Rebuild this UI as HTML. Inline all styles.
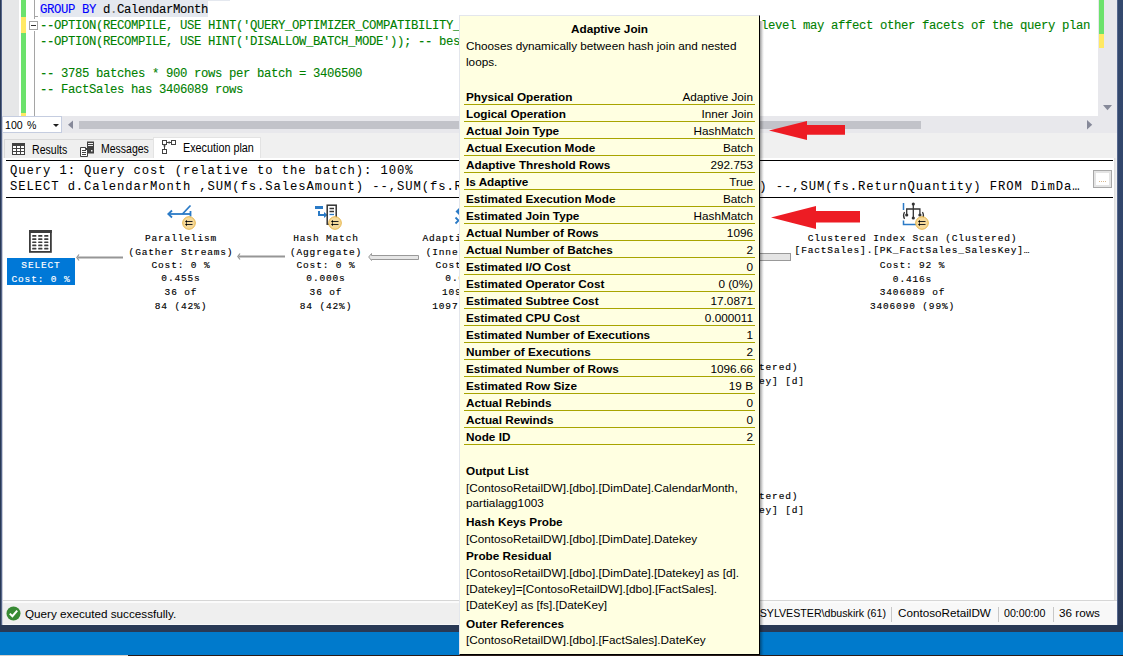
<!DOCTYPE html>
<html><head><meta charset="utf-8"><style>
*{margin:0;padding:0;box-sizing:border-box}
html,body{width:1123px;height:656px;overflow:hidden;background:#293955;position:relative;font-family:"Liberation Sans",sans-serif}
.a{position:absolute}
.m{font-family:"Liberation Mono",monospace;white-space:pre}
.s{font-family:"Liberation Sans",sans-serif;white-space:pre}
.cm{color:#008000}.kw{color:#0000ff}.op{color:#808080}
</style></head><body>
<div class="a" style="left:2px;top:0;width:1115px;height:116px;background:#fff"></div>
<div class="a" style="left:2px;top:0;width:17px;height:116px;background:#e6e7e8"></div>
<div class="a" style="left:21px;top:0;width:5px;height:17px;background:#6ce26c"></div>
<div class="a" style="left:21px;top:17px;width:5px;height:16px;background:#ffe963"></div>
<div class="a" style="left:21px;top:33px;width:5px;height:80px;background:#6ce26c"></div>
<div class="a" style="left:21px;top:113px;width:5px;height:3px;background:#ffe963"></div>
<div class="a" style="left:34px;top:0;width:1px;height:19px;background:#a5a5a5"></div>
<div class="a" style="left:35px;top:16px;width:3px;height:1px;background:#a5a5a5"></div>
<div class="a" style="left:29px;top:21px;width:9px;height:9px;border:1px solid #a5a5a5;background:#fff"></div>
<div class="a" style="left:31px;top:25px;width:5px;height:1px;background:#333"></div>
<div class="a" style="left:34px;top:31px;width:1px;height:85px;background:#a5a5a5"></div>
<div class="a" style="left:40px;top:0;width:190px;height:1px;background:#e4e8ef"></div>
<div class="a" style="left:40px;top:0;width:168px;height:17px;background:#e4e8ef"></div>
<div class="a m" style="left:40px;top:1.72px;font-size:12.3px;line-height:16px;letter-spacing:-0.38px;-webkit-text-stroke:0.1px currentColor"><span class="kw">GROUP BY</span> d<span class="op">.</span>CalendarMonth</div>
<div class="a m" style="left:40px;top:17.72px;font-size:12.3px;line-height:16px;letter-spacing:-0.38px;-webkit-text-stroke:0.1px currentColor"><span class="cm">--OPTION(RECOMPILE, USE HINT(&#x27;QUERY_OPTIMIZER_COMPATIBILITY_                                           level may affect other facets of the query plan</span></div>
<div class="a m" style="left:40px;top:33.72px;font-size:12.3px;line-height:16px;letter-spacing:-0.38px;-webkit-text-stroke:0.1px currentColor"><span class="cm">--OPTION(RECOMPILE, USE HINT(&#x27;DISALLOW_BATCH_MODE&#x27;)); -- best</span></div>
<div class="a m" style="left:40px;top:65.72px;font-size:12.3px;line-height:16px;letter-spacing:-0.38px;-webkit-text-stroke:0.1px currentColor"><span class="cm">-- 3785 batches * 900 rows per batch = 3406500</span></div>
<div class="a m" style="left:40px;top:81.72px;font-size:12.3px;line-height:16px;letter-spacing:-0.38px;-webkit-text-stroke:0.1px currentColor"><span class="cm">-- FactSales has 3406089 rows</span></div>
<div class="a" style="left:1098px;top:0;width:19px;height:116px;background:#e8e8ec"></div>
<div class="a" style="left:1099px;top:0;width:5px;height:34px;background:#6ce26c"></div>
<div class="a" style="left:1099px;top:34px;width:5px;height:14px;background:#ffe963"></div>
<svg class="a" style="left:1103px;top:105px" width="10" height="6"><path d="M0 0H9L4.5 5.2Z" fill="#868999"/></svg>
<div class="a" style="left:2px;top:116px;width:1115px;height:17px;background:#e8e8ec"></div>
<div class="a" style="left:2px;top:116px;width:60px;height:17px;background:#fff;border:1px solid #c5cde0"></div>
<div class="a s" style="left:5px;top:117.02px;font-size:11.5px;line-height:16px;color:#000;transform:scaleX(0.92);transform-origin:0 0;word-spacing:1.5px">100 %</div>
<svg class="a" style="left:53px;top:124px" width="6" height="4"><path d="M0 0H6L3 3Z" fill="#1e1e1e"/></svg>
<svg class="a" style="left:68px;top:120px" width="6" height="10"><path d="M5 0.5V9L0 4.75Z" fill="#868999"/></svg>
<div class="a" style="left:79px;top:121px;width:842px;height:8px;background:#c2c3c9"></div>
<svg class="a" style="left:1087px;top:120px" width="6" height="10"><path d="M0 0V9.5L5.2 4.75Z" fill="#868999"/></svg>
<div class="a" style="left:2px;top:133px;width:1115px;height:25px;background:#f0f0f0"></div>
<div class="a" style="left:4px;top:139px;width:69px;height:20px;background:#efefef;border:1px solid #d9d9d9;border-bottom:none"></div>
<div class="a" style="left:72px;top:139px;width:82px;height:20px;background:#efefef;border:1px solid #d9d9d9;border-bottom:none;border-left:none"></div>
<div class="a" style="left:153px;top:137px;width:108px;height:22px;background:#fff;border:1px solid #e3e3e3;border-bottom:none"></div>
<svg class="a" style="left:12px;top:143px" width="14" height="13"><rect x="0" y="0" width="13" height="12" fill="#424242"/><rect x="1" y="3" width="3" height="2" fill="#fff"/><rect x="5" y="3" width="3" height="2" fill="#fff"/><rect x="9" y="3" width="3" height="2" fill="#fff"/><rect x="1" y="6" width="3" height="2" fill="#fff"/><rect x="5" y="6" width="3" height="2" fill="#fff"/><rect x="9" y="6" width="3" height="2" fill="#fff"/><rect x="1" y="9" width="3" height="2" fill="#fff"/><rect x="5" y="9" width="3" height="2" fill="#fff"/><rect x="9" y="9" width="3" height="2" fill="#fff"/></svg>
<div class="a s" style="left:32px;top:141.84px;font-size:12px;line-height:16px;color:#000;transform:scaleX(0.88);transform-origin:0 0">Results</div>
<svg class="a" style="left:79px;top:141px" width="16" height="16"><path d="M1.5 6.5H6.5L8.5 8.5V15.5H1.5Z" fill="#fff" stroke="#424242" stroke-width="1"/><path d="M3 9.5H7M3 11.5H7M3 13.5H7" stroke="#424242" stroke-width="1"/><rect x="8" y="0.5" width="7" height="12" fill="#424242"/><rect x="9" y="2" width="5" height="1" fill="#f0f0f0"/><rect x="9" y="4" width="5" height="1" fill="#f0f0f0"/><rect x="12" y="9" width="1.5" height="1.5" fill="#f0f0f0"/><path d="M6.5 6.5V8.5H8.5" fill="none" stroke="#424242"/></svg>
<div class="a s" style="left:101px;top:141.34px;font-size:12px;line-height:16px;color:#000;transform:scaleX(0.875);transform-origin:0 0">Messages</div>
<svg class="a" style="left:161px;top:139px" width="16" height="16"><rect x="1.5" y="1.5" width="4" height="4" fill="none" stroke="#424242"/><rect x="10.5" y="1.5" width="4" height="4" fill="none" stroke="#424242"/><rect x="1.5" y="10.5" width="4" height="4" fill="none" stroke="#424242"/><path d="M6 3.5H10M3.5 6V10" stroke="#424242"/><path d="M6.5 3.5L8.5 2V5Z M3.5 8.5L2 6.5H5Z" fill="#424242"/></svg>
<div class="a s" style="left:183px;top:139.84px;font-size:12px;line-height:16px;color:#000;transform:scaleX(0.9);transform-origin:0 0">Execution plan</div>
<div class="a" style="left:2px;top:158px;width:1115px;height:442px;background:#fff"></div>
<div class="a" style="left:6px;top:160px;width:1107px;height:1px;background:#000"></div>
<div class="a" style="left:6px;top:197px;width:1107px;height:1px;background:#000"></div>
<div class="a m" style="left:10px;top:163.85px;font-size:12.2px;line-height:15px;letter-spacing:0.92px;color:#000;-webkit-text-stroke:0.05px #000">Query 1: Query cost (relative to the batch): 100%</div>
<div class="a m" style="left:10px;top:179.85px;font-size:12.2px;line-height:15px;letter-spacing:0.92px;color:#000;-webkit-text-stroke:0.05px #000">SELECT d.CalendarMonth ,SUM(fs.SalesAmount) --,SUM(fs.ReturnAmount) --,SUM(fs.SalesQuantity) --,SUM(fs.ReturnQuantity) FROM DimDa…</div>
<div class="a" style="left:1093px;top:170px;width:19px;height:18px;border:1px solid #a8a8a8;background:#fff;box-shadow:inset 0 0 0 2px #e4e4e4"></div>
<div class="a" style="left:1099px;top:181px;width:7px;height:1px;background:repeating-linear-gradient(90deg,#d8b890 0 1px,#fff 1px 2px)"></div>
<div class="a" style="left:1114px;top:158px;width:3px;height:442px;background:linear-gradient(90deg,#dcdcdc,#f4f4f4)"></div>
<div class="a" style="left:7px;top:258px;width:68px;height:27px;background:#0078d7"></div>
<div class="a m" style="left:-159.0px;width:400px;text-align:center;top:259.17px;font-size:9.5px;line-height:14px;letter-spacing:0.85px;color:#fff;-webkit-text-stroke:0.15px #fff">SELECT</div>
<div class="a m" style="left:-159.0px;width:400px;text-align:center;top:273.17px;font-size:9.5px;line-height:14px;letter-spacing:0.85px;color:#fff;-webkit-text-stroke:0.15px #fff">Cost: 0 %</div>
<svg class="a" style="left:29px;top:230px" width="24" height="23"><rect x="0.9" y="0.9" width="21" height="21" fill="#fff" stroke="#3c3c3c" stroke-width="1.8"/><rect x="0" y="0" width="22.8" height="3" fill="#3c3c3c"/><rect x="3.2" y="5.0" width="4.2" height="1.7" rx="0.5" fill="#3c3c3c"/><rect x="9.2" y="5.0" width="4.2" height="1.7" rx="0.5" fill="#3c3c3c"/><rect x="15.2" y="5.0" width="4.2" height="1.7" rx="0.5" fill="#3c3c3c"/><rect x="3.2" y="8.2" width="4.2" height="1.7" rx="0.5" fill="#3c3c3c"/><rect x="9.2" y="8.2" width="4.2" height="1.7" rx="0.5" fill="#3c3c3c"/><rect x="15.2" y="8.2" width="4.2" height="1.7" rx="0.5" fill="#3c3c3c"/><rect x="3.2" y="11.4" width="4.2" height="1.7" rx="0.5" fill="#3c3c3c"/><rect x="9.2" y="11.4" width="4.2" height="1.7" rx="0.5" fill="#3c3c3c"/><rect x="15.2" y="11.4" width="4.2" height="1.7" rx="0.5" fill="#3c3c3c"/><rect x="3.2" y="14.6" width="4.2" height="1.7" rx="0.5" fill="#3c3c3c"/><rect x="9.2" y="14.6" width="4.2" height="1.7" rx="0.5" fill="#3c3c3c"/><rect x="15.2" y="14.6" width="4.2" height="1.7" rx="0.5" fill="#3c3c3c"/><rect x="3.2" y="17.8" width="4.2" height="1.7" rx="0.5" fill="#3c3c3c"/><rect x="9.2" y="17.8" width="4.2" height="1.7" rx="0.5" fill="#3c3c3c"/><rect x="15.2" y="17.8" width="4.2" height="1.7" rx="0.5" fill="#3c3c3c"/></svg>
<svg class="a" style="left:76px;top:251.5px" width="47" height="11"><path d="M3 2.5L0.8 5.5L3 8.5" fill="none" stroke="#969696" stroke-width="1.2"/><path d="M1.5 5.5H47" stroke="#969696" stroke-width="2"/></svg>
<svg class="a" style="left:237px;top:251px" width="48" height="11"><path d="M3 2.5L0.8 5.5L3 8.5" fill="none" stroke="#969696" stroke-width="1.2"/><path d="M1.5 5.5H48" stroke="#969696" stroke-width="2"/></svg>
<svg class="a" style="left:368px;top:251px" width="51" height="12"><path d="M0.7 6L3.5 2.5V4.5H50.5V8.5H3.5V9.5Z" fill="#e6e6e6" stroke="#999" stroke-width="1"/></svg>
<div class="a" style="left:758px;top:253px;width:33px;height:8px;background:#e4e4e4;border:1px solid #999;border-left:none"></div>
<svg class="a" style="left:166px;top:203px" width="27" height="17"><path d="M2.5 11H24.5" stroke="#2a7ac6" stroke-width="1.8"/><path d="M6 7.5L2.3 11L6 14.5" fill="none" stroke="#2a7ac6" stroke-width="1.8"/><path d="M16.5 11L24.5 2.5" stroke="#2a7ac6" stroke-width="1.8"/><path d="M24.5 8V13.5" stroke="#2a7ac6" stroke-width="1.8"/></svg>
<svg class="a" style="left:181.5px;top:215.5px" width="14" height="14"><circle cx="7" cy="7" r="6.3" fill="#f5d99a" stroke="#e6b54a" stroke-width="1"/><path d="M4 5.5H10.5M4 8.5H10.5" stroke="#222" stroke-width="1"/><path d="M3 5.5L5 4V7Z M3 8.5L5 7V10Z" fill="#000"/></svg>
<svg class="a" style="left:313px;top:203px" width="26" height="24"><rect x="2" y="3" width="8" height="3" fill="#2a7ac6"/><path d="M6 8V12H12" fill="none" stroke="#2a7ac6" stroke-width="2"/><path d="M11 9L14.5 12L11 15Z" fill="#2a7ac6"/><rect x="14.2" y="2.2" width="9" height="19" fill="#fff" stroke="#333" stroke-width="1.5"/><path d="M16.5 5.5H21M16.5 8.5H21" stroke="#333" stroke-width="1.3"/><path d="M16.5 11.5H21" stroke="#2a7ac6" stroke-width="1.3"/></svg>
<svg class="a" style="left:328px;top:215.5px" width="14" height="14"><circle cx="7" cy="7" r="6.3" fill="#f5d99a" stroke="#e6b54a" stroke-width="1"/><path d="M4 5.5H10.5M4 8.5H10.5" stroke="#222" stroke-width="1"/><path d="M3 5.5L5 4V7Z M3 8.5L5 7V10Z" fill="#000"/></svg>
<svg class="a" style="left:900px;top:201px" width="28" height="26"><path d="M3.5 2V9M3.5 19.5V23.5H16" fill="none" stroke="#2a7ac6" stroke-width="1.5"/><path d="M13.3 3V17M6.7 14V8H19.9V14" fill="none" stroke="#333" stroke-width="1.3"/><circle cx="13.3" cy="3" r="1.6" fill="#333"/><circle cx="13.3" cy="17" r="1.6" fill="#333"/><circle cx="6.7" cy="14" r="1.6" fill="#333"/><circle cx="19.9" cy="14" r="1.6" fill="#333"/><path d="M4.5 11Q2.5 14.5 4.5 18M22.5 11Q24.5 14.5 22.5 18" fill="none" stroke="#333" stroke-width="1.2"/></svg>
<svg class="a" style="left:915px;top:215.5px" width="14" height="14"><circle cx="7" cy="7" r="6.3" fill="#f5d99a" stroke="#e6b54a" stroke-width="1"/><path d="M4 5.5H10.5M4 8.5H10.5" stroke="#222" stroke-width="1"/><path d="M3 5.5L5 4V7Z M3 8.5L5 7V10Z" fill="#000"/></svg>
<svg class="a" style="left:454px;top:206px" width="6" height="20"><path d="M5 2L1.5 5.5L5 9Z" fill="#2a7ac6"/><path d="M1.5 11.5L4.5 14.5L1.5 17.5" fill="none" stroke="#2a7ac6" stroke-width="1.8"/></svg>
<div class="a m" style="left:-19.0px;width:400px;text-align:center;top:231.97px;font-size:9.5px;line-height:14px;letter-spacing:0.85px;color:#000;-webkit-text-stroke:0.15px #000">Parallelism</div>
<div class="a m" style="left:-19.0px;width:400px;text-align:center;top:245.87px;font-size:9.5px;line-height:14px;letter-spacing:0.85px;color:#000;-webkit-text-stroke:0.15px #000">(Gather Streams)</div>
<div class="a m" style="left:-19.0px;width:400px;text-align:center;top:259.17px;font-size:9.5px;line-height:14px;letter-spacing:0.85px;color:#000;-webkit-text-stroke:0.15px #000">Cost: 0 %</div>
<div class="a m" style="left:-19.0px;width:400px;text-align:center;top:272.47px;font-size:9.5px;line-height:14px;letter-spacing:0.85px;color:#000;-webkit-text-stroke:0.15px #000">0.455s</div>
<div class="a m" style="left:-19.0px;width:400px;text-align:center;top:286.17px;font-size:9.5px;line-height:14px;letter-spacing:0.85px;color:#000;-webkit-text-stroke:0.15px #000">36 of</div>
<div class="a m" style="left:-19.0px;width:400px;text-align:center;top:300.17px;font-size:9.5px;line-height:14px;letter-spacing:0.85px;color:#000;-webkit-text-stroke:0.15px #000">84 (42%)</div>
<div class="a m" style="left:126.0px;width:400px;text-align:center;top:231.97px;font-size:9.5px;line-height:14px;letter-spacing:0.85px;color:#000;-webkit-text-stroke:0.15px #000">Hash Match</div>
<div class="a m" style="left:126.0px;width:400px;text-align:center;top:245.87px;font-size:9.5px;line-height:14px;letter-spacing:0.85px;color:#000;-webkit-text-stroke:0.15px #000">(Aggregate)</div>
<div class="a m" style="left:126.0px;width:400px;text-align:center;top:259.17px;font-size:9.5px;line-height:14px;letter-spacing:0.85px;color:#000;-webkit-text-stroke:0.15px #000">Cost: 0 %</div>
<div class="a m" style="left:126.0px;width:400px;text-align:center;top:272.47px;font-size:9.5px;line-height:14px;letter-spacing:0.85px;color:#000;-webkit-text-stroke:0.15px #000">0.000s</div>
<div class="a m" style="left:126.0px;width:400px;text-align:center;top:286.17px;font-size:9.5px;line-height:14px;letter-spacing:0.85px;color:#000;-webkit-text-stroke:0.15px #000">36 of</div>
<div class="a m" style="left:126.0px;width:400px;text-align:center;top:300.17px;font-size:9.5px;line-height:14px;letter-spacing:0.85px;color:#000;-webkit-text-stroke:0.15px #000">84 (42%)</div>
<div class="a m" style="left:265.0px;width:400px;text-align:center;top:231.97px;font-size:9.5px;line-height:14px;letter-spacing:0.85px;color:#000;-webkit-text-stroke:0.15px #000">Adaptive Join</div>
<div class="a m" style="left:265.0px;width:400px;text-align:center;top:245.87px;font-size:9.5px;line-height:14px;letter-spacing:0.85px;color:#000;-webkit-text-stroke:0.15px #000">(Inner Join)</div>
<div class="a m" style="left:265.0px;width:400px;text-align:center;top:259.17px;font-size:9.5px;line-height:14px;letter-spacing:0.85px;color:#000;-webkit-text-stroke:0.15px #000">Cost: 0 %</div>
<div class="a m" style="left:265.0px;width:400px;text-align:center;top:272.47px;font-size:9.5px;line-height:14px;letter-spacing:0.85px;color:#000;-webkit-text-stroke:0.15px #000">0.001s</div>
<div class="a m" style="left:265.0px;width:400px;text-align:center;top:286.17px;font-size:9.5px;line-height:14px;letter-spacing:0.85px;color:#000;-webkit-text-stroke:0.15px #000">1096 of</div>
<div class="a m" style="left:265.0px;width:400px;text-align:center;top:300.17px;font-size:9.5px;line-height:14px;letter-spacing:0.85px;color:#000;-webkit-text-stroke:0.15px #000">1097 (99%)</div>
<div class="a m" style="left:712.5px;width:400px;text-align:center;top:232.47px;font-size:9.5px;line-height:14px;letter-spacing:0.85px;color:#000;-webkit-text-stroke:0.15px #000">Clustered Index Scan (Clustered)</div>
<div class="a m" style="left:712.5px;width:400px;text-align:center;top:243.67px;font-size:9.5px;line-height:14px;letter-spacing:0.85px;color:#000;-webkit-text-stroke:0.15px #000">[FactSales].[PK_FactSales_SalesKey]…</div>
<div class="a m" style="left:712.5px;width:400px;text-align:center;top:259.17px;font-size:9.5px;line-height:14px;letter-spacing:0.85px;color:#000;-webkit-text-stroke:0.15px #000">Cost: 92 %</div>
<div class="a m" style="left:712.5px;width:400px;text-align:center;top:273.27px;font-size:9.5px;line-height:14px;letter-spacing:0.85px;color:#000;-webkit-text-stroke:0.15px #000">0.416s</div>
<div class="a m" style="left:712.5px;width:400px;text-align:center;top:285.97px;font-size:9.5px;line-height:14px;letter-spacing:0.85px;color:#000;-webkit-text-stroke:0.15px #000">3406089 of</div>
<div class="a m" style="left:712.5px;width:400px;text-align:center;top:299.97px;font-size:9.5px;line-height:14px;letter-spacing:0.85px;color:#000;-webkit-text-stroke:0.15px #000">3406090 (99%)</div>
<div class="a m" style="left:759px;top:361.17px;font-size:9.5px;line-height:14px;letter-spacing:0.85px;color:#000;-webkit-text-stroke:0.15px #000">tered)</div>
<div class="a m" style="left:759px;top:374.67px;font-size:9.5px;line-height:14px;letter-spacing:0.85px;color:#000;-webkit-text-stroke:0.15px #000">ey] [d]</div>
<div class="a m" style="left:759px;top:490.07px;font-size:9.5px;line-height:14px;letter-spacing:0.85px;color:#000;-webkit-text-stroke:0.15px #000">tered)</div>
<div class="a m" style="left:759px;top:503.97px;font-size:9.5px;line-height:14px;letter-spacing:0.85px;color:#000;-webkit-text-stroke:0.15px #000">ey] [d]</div>
<div class="a" style="left:2px;top:600px;width:1115px;height:1px;background:#d6d6d6"></div>
<div class="a" style="left:2px;top:601px;width:1115px;height:2px;background:#fbfbfb"></div>
<div class="a" style="left:2px;top:603px;width:1115px;height:22px;background:#efefef"></div>
<div class="a" style="left:2px;top:624px;width:1115px;height:1px;background:#f8f8f8"></div>
<div class="a" style="left:1px;top:0;width:1px;height:625px;background:#55658a"></div>
<div class="a" style="left:2px;top:116px;width:1px;height:509px;background:#c9cdd8"></div>
<div class="a" style="left:0;top:632px;width:1123px;height:23px;background:#007acc"></div>
<svg class="a" style="left:6px;top:606px" width="15" height="15"><circle cx="7.5" cy="7.5" r="7" fill="#388a34"/><path d="M3.8 7.6L6.4 10.2L11.2 4.6" fill="none" stroke="#fff" stroke-width="2"/></svg>
<div class="a s" style="left:25px;top:605.95px;font-size:11.7px;line-height:16px;color:#000;">Query executed successfully.</div>
<div class="a" style="left:760px;top:603px;width:357px;height:21px;background:#f8f8f8"></div>
<div class="a s" style="left:740px;top:605.45px;font-size:11.7px;line-height:16px;color:#000;width:146px;text-align:right;transform:scaleX(0.91);transform-origin:100% 0">SYLVESTER\dbuskirk (61)</div>
<div class="a" style="left:891px;top:607px;width:1px;height:15px;background:#c8c8c8"></div>
<div class="a s" style="left:898px;top:605.45px;font-size:11.7px;line-height:16px;color:#000;">ContosoRetailDW</div>
<div class="a" style="left:998px;top:607px;width:1px;height:15px;background:#c8c8c8"></div>
<div class="a s" style="left:1004px;top:605.45px;font-size:11.7px;line-height:16px;color:#000;transform:scaleX(0.91);transform-origin:0 0">00:00:00</div>
<div class="a" style="left:1053px;top:607px;width:1px;height:15px;background:#c8c8c8"></div>
<div class="a s" style="left:1059px;top:605.45px;font-size:11.7px;line-height:16px;color:#000;">36 rows</div>
<div class="a" style="left:1117px;top:0;width:6px;height:625px;background:linear-gradient(180deg,#34496e,#30446a 60%,#2b3b5b)"></div>
<div class="a" style="left:1117px;top:0;width:1px;height:625px;background:#56688e"></div>
<div class="a" style="left:760px;top:21px;width:4px;height:635px;background:linear-gradient(90deg,rgba(0,0,0,.38),rgba(0,0,0,.12) 60%,rgba(0,0,0,0))"></div>
<div class="a" style="left:459px;top:15px;width:301px;height:640px;background:#ffffe1;border-left:1px solid #e3e6ec;border-top:1px solid #e3e6ec;border-right:1px solid #000;border-bottom:1px solid #000"></div>
<div class="a" style="left:128px;top:655px;width:995px;height:1px;background:#2a1c18"></div>
<div class="a" style="left:0;top:655px;width:128px;height:1px;background:#d8d0c8"></div>
<div class="a s" style="left:459px;top:20.83px;font-size:11.75px;line-height:16px;color:#000;font-weight:700;width:301px;text-align:center">Adaptive Join</div>
<div class="a s" style="left:466px;top:38.23px;font-size:11.75px;line-height:16px;color:#000;">Chooses dynamically between hash join and nested</div>
<div class="a s" style="left:466px;top:53.73px;font-size:11.75px;line-height:16px;color:#000;">loops.</div>
<div class="a" style="left:464px;top:104px;width:291px;height:1px;background:#a8a400"></div>
<div class="a s" style="left:466px;top:88.63px;font-size:11.75px;line-height:16px;color:#000;font-weight:700;">Physical Operation</div>
<div class="a s" style="left:455px;top:88.63px;font-size:11.75px;line-height:16px;color:#000;width:298px;text-align:right">Adaptive Join</div>
<div class="a" style="left:464px;top:121px;width:291px;height:1px;background:#a8a400"></div>
<div class="a s" style="left:466px;top:105.63px;font-size:11.75px;line-height:16px;color:#000;font-weight:700;">Logical Operation</div>
<div class="a s" style="left:455px;top:105.63px;font-size:11.75px;line-height:16px;color:#000;width:298px;text-align:right">Inner Join</div>
<div class="a" style="left:464px;top:138px;width:291px;height:1px;background:#a8a400"></div>
<div class="a s" style="left:466px;top:122.63px;font-size:11.75px;line-height:16px;color:#000;font-weight:700;">Actual Join Type</div>
<div class="a s" style="left:455px;top:122.63px;font-size:11.75px;line-height:16px;color:#000;width:298px;text-align:right">HashMatch</div>
<div class="a" style="left:464px;top:155px;width:291px;height:1px;background:#a8a400"></div>
<div class="a s" style="left:466px;top:139.63px;font-size:11.75px;line-height:16px;color:#000;font-weight:700;">Actual Execution Mode</div>
<div class="a s" style="left:455px;top:139.63px;font-size:11.75px;line-height:16px;color:#000;width:298px;text-align:right">Batch</div>
<div class="a" style="left:464px;top:172px;width:291px;height:1px;background:#a8a400"></div>
<div class="a s" style="left:466px;top:156.63px;font-size:11.75px;line-height:16px;color:#000;font-weight:700;">Adaptive Threshold Rows</div>
<div class="a s" style="left:455px;top:156.63px;font-size:11.75px;line-height:16px;color:#000;width:298px;text-align:right">292.753</div>
<div class="a" style="left:464px;top:189px;width:291px;height:1px;background:#a8a400"></div>
<div class="a s" style="left:466px;top:173.63px;font-size:11.75px;line-height:16px;color:#000;font-weight:700;">Is Adaptive</div>
<div class="a s" style="left:455px;top:173.63px;font-size:11.75px;line-height:16px;color:#000;width:298px;text-align:right">True</div>
<div class="a" style="left:464px;top:206px;width:291px;height:1px;background:#a8a400"></div>
<div class="a s" style="left:466px;top:190.63px;font-size:11.75px;line-height:16px;color:#000;font-weight:700;">Estimated Execution Mode</div>
<div class="a s" style="left:455px;top:190.63px;font-size:11.75px;line-height:16px;color:#000;width:298px;text-align:right">Batch</div>
<div class="a" style="left:464px;top:223px;width:291px;height:1px;background:#a8a400"></div>
<div class="a s" style="left:466px;top:207.63px;font-size:11.75px;line-height:16px;color:#000;font-weight:700;">Estimated Join Type</div>
<div class="a s" style="left:455px;top:207.63px;font-size:11.75px;line-height:16px;color:#000;width:298px;text-align:right">HashMatch</div>
<div class="a" style="left:464px;top:240px;width:291px;height:1px;background:#a8a400"></div>
<div class="a s" style="left:466px;top:224.63px;font-size:11.75px;line-height:16px;color:#000;font-weight:700;">Actual Number of Rows</div>
<div class="a s" style="left:455px;top:224.63px;font-size:11.75px;line-height:16px;color:#000;width:298px;text-align:right">1096</div>
<div class="a" style="left:464px;top:257px;width:291px;height:1px;background:#a8a400"></div>
<div class="a s" style="left:466px;top:241.63px;font-size:11.75px;line-height:16px;color:#000;font-weight:700;">Actual Number of Batches</div>
<div class="a s" style="left:455px;top:241.63px;font-size:11.75px;line-height:16px;color:#000;width:298px;text-align:right">2</div>
<div class="a" style="left:464px;top:274px;width:291px;height:1px;background:#a8a400"></div>
<div class="a s" style="left:466px;top:258.63px;font-size:11.75px;line-height:16px;color:#000;font-weight:700;">Estimated I/O Cost</div>
<div class="a s" style="left:455px;top:258.63px;font-size:11.75px;line-height:16px;color:#000;width:298px;text-align:right">0</div>
<div class="a" style="left:464px;top:291px;width:291px;height:1px;background:#a8a400"></div>
<div class="a s" style="left:466px;top:275.63px;font-size:11.75px;line-height:16px;color:#000;font-weight:700;">Estimated Operator Cost</div>
<div class="a s" style="left:455px;top:275.63px;font-size:11.75px;line-height:16px;color:#000;width:298px;text-align:right">0 (0%)</div>
<div class="a" style="left:464px;top:308px;width:291px;height:1px;background:#a8a400"></div>
<div class="a s" style="left:466px;top:292.63px;font-size:11.75px;line-height:16px;color:#000;font-weight:700;">Estimated Subtree Cost</div>
<div class="a s" style="left:455px;top:292.63px;font-size:11.75px;line-height:16px;color:#000;width:298px;text-align:right">17.0871</div>
<div class="a" style="left:464px;top:325px;width:291px;height:1px;background:#a8a400"></div>
<div class="a s" style="left:466px;top:309.63px;font-size:11.75px;line-height:16px;color:#000;font-weight:700;">Estimated CPU Cost</div>
<div class="a s" style="left:455px;top:309.63px;font-size:11.75px;line-height:16px;color:#000;width:298px;text-align:right">0.000011</div>
<div class="a" style="left:464px;top:342px;width:291px;height:1px;background:#a8a400"></div>
<div class="a s" style="left:466px;top:326.63px;font-size:11.75px;line-height:16px;color:#000;font-weight:700;">Estimated Number of Executions</div>
<div class="a s" style="left:455px;top:326.63px;font-size:11.75px;line-height:16px;color:#000;width:298px;text-align:right">1</div>
<div class="a" style="left:464px;top:359px;width:291px;height:1px;background:#a8a400"></div>
<div class="a s" style="left:466px;top:343.63px;font-size:11.75px;line-height:16px;color:#000;font-weight:700;">Number of Executions</div>
<div class="a s" style="left:455px;top:343.63px;font-size:11.75px;line-height:16px;color:#000;width:298px;text-align:right">2</div>
<div class="a" style="left:464px;top:376px;width:291px;height:1px;background:#a8a400"></div>
<div class="a s" style="left:466px;top:360.63px;font-size:11.75px;line-height:16px;color:#000;font-weight:700;">Estimated Number of Rows</div>
<div class="a s" style="left:455px;top:360.63px;font-size:11.75px;line-height:16px;color:#000;width:298px;text-align:right">1096.66</div>
<div class="a" style="left:464px;top:393px;width:291px;height:1px;background:#a8a400"></div>
<div class="a s" style="left:466px;top:377.63px;font-size:11.75px;line-height:16px;color:#000;font-weight:700;">Estimated Row Size</div>
<div class="a s" style="left:455px;top:377.63px;font-size:11.75px;line-height:16px;color:#000;width:298px;text-align:right">19 B</div>
<div class="a" style="left:464px;top:410px;width:291px;height:1px;background:#a8a400"></div>
<div class="a s" style="left:466px;top:394.63px;font-size:11.75px;line-height:16px;color:#000;font-weight:700;">Actual Rebinds</div>
<div class="a s" style="left:455px;top:394.63px;font-size:11.75px;line-height:16px;color:#000;width:298px;text-align:right">0</div>
<div class="a" style="left:464px;top:427px;width:291px;height:1px;background:#a8a400"></div>
<div class="a s" style="left:466px;top:411.63px;font-size:11.75px;line-height:16px;color:#000;font-weight:700;">Actual Rewinds</div>
<div class="a s" style="left:455px;top:411.63px;font-size:11.75px;line-height:16px;color:#000;width:298px;text-align:right">0</div>
<div class="a" style="left:464px;top:444px;width:291px;height:1px;background:#a8a400"></div>
<div class="a s" style="left:466px;top:428.63px;font-size:11.75px;line-height:16px;color:#000;font-weight:700;">Node ID</div>
<div class="a s" style="left:455px;top:428.63px;font-size:11.75px;line-height:16px;color:#000;width:298px;text-align:right">2</div>
<div class="a s" style="left:466px;top:462.53px;font-size:11.75px;line-height:16px;color:#000;font-weight:700;">Output List</div>
<div class="a s" style="left:466px;top:479.93px;font-size:11.75px;line-height:16px;color:#000;">[ContosoRetailDW].[dbo].[DimDate].CalendarMonth,</div>
<div class="a s" style="left:466px;top:495.43px;font-size:11.75px;line-height:16px;color:#000;">partialagg1003</div>
<div class="a s" style="left:466px;top:513.63px;font-size:11.75px;line-height:16px;color:#000;font-weight:700;">Hash Keys Probe</div>
<div class="a s" style="left:466px;top:530.73px;font-size:11.75px;line-height:16px;color:#000;">[ContosoRetailDW].[dbo].[DimDate].Datekey</div>
<div class="a s" style="left:466px;top:548.23px;font-size:11.75px;line-height:16px;color:#000;font-weight:700;">Probe Residual</div>
<div class="a s" style="left:466px;top:565.43px;font-size:11.75px;line-height:16px;color:#000;">[ContosoRetailDW].[dbo].[DimDate].[Datekey] as [d].</div>
<div class="a s" style="left:466px;top:580.93px;font-size:11.75px;line-height:16px;color:#000;">[Datekey]=[ContosoRetailDW].[dbo].[FactSales].</div>
<div class="a s" style="left:466px;top:596.93px;font-size:11.75px;line-height:16px;color:#000;">[DateKey] as [fs].[DateKey]</div>
<div class="a s" style="left:466px;top:615.73px;font-size:11.75px;line-height:16px;color:#000;font-weight:700;">Outer References</div>
<div class="a s" style="left:466px;top:632.23px;font-size:11.75px;line-height:16px;color:#000;">[ContosoRetailDW].[dbo].[FactSales].DateKey</div>
<svg class="a" style="left:0;top:0" width="1123" height="656"><path d="M769 130.4L807 121V125H845V134.7H807V140Z" fill="#ed1c24"/><path d="M771 217.5L816 206V211H860V222.6H816V229Z" fill="#ed1c24"/></svg>
</body></html>
